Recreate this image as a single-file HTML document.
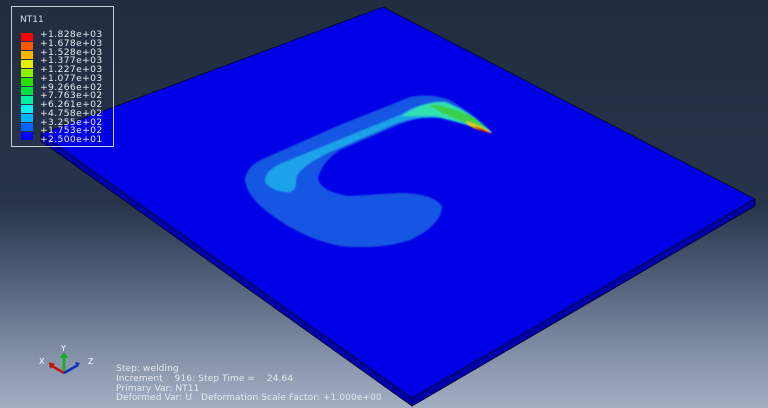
<!DOCTYPE html><html><head><style>
body{margin:0;width:768px;height:408px;overflow:hidden;background:linear-gradient(#212d40 0%,#27344a 50%,#4f5f78 68%,#8693aa 88%,#a2afc3 100%);font-family:"DejaVu Sans","Liberation Sans",sans-serif;position:relative}
.lg{position:absolute;left:11px;top:6px;width:103px;height:141px;border:1px solid #c8ccd4;box-sizing:border-box}
.lg .t{position:absolute;left:8px;top:8px;font-size:9px;color:#dde}
.lg .c{position:absolute;left:9px;width:12px;height:8.2px}
.lg .v{position:absolute;left:28px;top:24px;font-size:9.2px;color:#e8ecf0;line-height:8.75px;letter-spacing:0.35px}
.info{position:absolute;left:116px;top:365px;font-size:9px;color:#e4e8ee;line-height:9.8px;white-space:pre;letter-spacing:0.1px}
</style></head><body>
<svg width="768" height="408" style="position:absolute;left:0;top:0">
<defs><filter id="b"><feGaussianBlur stdDeviation="0.8"/></filter></defs>
<polygon points="41,134 412,398 412,406 41,141" fill="#0000a8" stroke="#000030" stroke-width="0.8"/>
<polygon points="412,398 755,199 755,206 412,406" fill="#0000a8" stroke="#000030" stroke-width="0.8"/>
<polygon points="383,7 755,199 412,398 41,134" fill="#0000e6" stroke="#000030" stroke-width="0.8"/>
<g filter="url(#b)">
<path d="M245,178 Q248,165 265,158 L340,125 L410,97 Q430,93 450,100 Q475,115 493,133 Q470,126 440,118 Q420,116 400,124 L340,150 Q322,162 318,178 Q320,192 350,196 L400,193 Q432,193 442,206 Q442,225 410,240 Q380,250 340,246 Q300,238 265,210 Q245,193 245,178 Z" fill="#1456e4"/>
<path d="M265,182 Q264,172 280,164 L400,115 Q420,102 445,103 Q470,110 490,132 Q465,123 440,118 Q415,116 395,124 L330,152 Q300,166 296,178 Q297,190 290,192 Q272,192 265,182 Z" fill="#1fa2ea"/>
<path d="M402,116 Q422,101 445,102 Q470,112 491,132 Q462,122 435,116 Q415,116 402,116 Z" fill="#30e0b0"/>
<path d="M428,104 Q452,106 475,118 L491,133 Q470,125 442,113 Z" fill="#3ad048"/>
<path d="M466,121 Q482,126 492,133 Q478,131 468,125 Z" fill="#e0d000"/>
<path d="M474,126 Q485,129 490,133 Q480,131 476,128 Z" fill="#e01000"/>
</g>
<g stroke-width="2.5">
<line x1="64" y1="373" x2="64" y2="356" stroke="#10b010"/>
<line x1="64" y1="373" x2="52" y2="366" stroke="#c01010"/>
<line x1="64" y1="373" x2="78" y2="365" stroke="#1030c0"/>
</g>
<polygon points="60,358 64,352 68,358" fill="#10b010"/>
<polygon points="49,362 50,369 55,364" fill="#c01010"/>
<polygon points="80,363 75,362 77,367" fill="#1030c0"/>
<text x="61" y="351" font-size="8" fill="#fff" font-family="DejaVu Sans">Y</text>
<text x="39" y="364" font-size="8" fill="#fff" font-family="DejaVu Sans">X</text>
<text x="88" y="364" font-size="8" fill="#fff" font-family="DejaVu Sans">Z</text>
</svg>
<div class="lg"><div class="t">NT11</div>
<div class="c" style="top:26px;background:#ff0000"></div>
<div class="c" style="top:35px;background:#ff5a00"></div>
<div class="c" style="top:44px;background:#ffb400"></div>
<div class="c" style="top:53px;background:#e8f000"></div>
<div class="c" style="top:62px;background:#8ef000"></div>
<div class="c" style="top:71px;background:#28e000"></div>
<div class="c" style="top:80px;background:#00e040"></div>
<div class="c" style="top:89px;background:#00f0a0"></div>
<div class="c" style="top:98px;background:#00f0f0"></div>
<div class="c" style="top:107px;background:#00b4ff"></div>
<div class="c" style="top:116px;background:#0064ff"></div>
<div class="c" style="top:125px;background:#0000ff"></div>
<div class="v">+1.828e+03<br>+1.678e+03<br>+1.528e+03<br>+1.377e+03<br>+1.227e+03<br>+1.077e+03<br>+9.266e+02<br>+7.763e+02<br>+6.261e+02<br>+4.758e+02<br>+3.255e+02<br>+1.753e+02<br>+2.500e+01</div>
</div>
<div class="info">Step: welding
Increment    916: Step Time =    24.64
Primary Var: NT11
Deformed Var: U   Deformation Scale Factor: +1.000e+00</div>
</body></html>
